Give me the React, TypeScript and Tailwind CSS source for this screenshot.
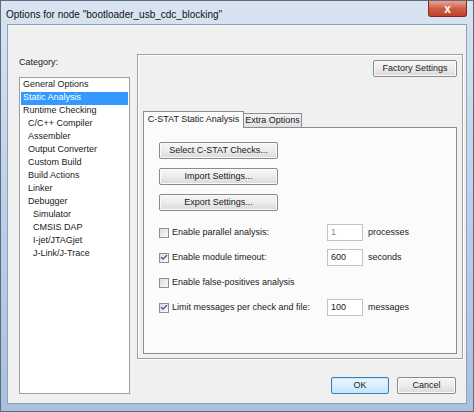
import { Check } from 'lucide-react'

const font = { fontFamily: '"Liberation Sans", Arial, sans-serif' }

function WinButton({ label, className = '' }: { label: string; className?: string }) {
  return (
    <div
      className={`flex h-[17px] items-center justify-center rounded-[2px] border border-[#8a8a8a] bg-gradient-to-b from-[#f6f6f6] via-[#ececec] to-[#d9d9d9] text-[9px] text-[#1a1a1a] shadow-[inset_0_0_0_1px_#fbfbfb] ${className}`}
    >
      {label}
    </div>
  )
}

function CheckBox({ checked }: { checked: boolean }) {
  return (
    <div className="flex h-[10px] w-[10px] items-center justify-center border border-[#8f8f8f] bg-gradient-to-br from-[#dcdcdc] to-[#fafafa]">
      {checked && <Check className="h-[9px] w-[9px] text-[#3b4f8a]" strokeWidth={3.5} />}
    </div>
  )
}

function OptionRow({
  checked,
  label,
  value,
  unit,
}: {
  checked: boolean
  label: string
  value?: string
  unit?: string
}) {
  return (
    <div className="flex h-[17px] items-center">
      <CheckBox checked={checked} />
      <span className="ml-[3px] w-[155px] text-[9px] text-[#1a1a1a]">{label}</span>
      {value !== undefined && (
        <>
          <div
            className={`flex h-[17px] w-[36px] items-center border border-[#c2c2c2] bg-white pl-[3px] text-[9px] ${
              checked ? 'text-[#1a1a1a]' : 'text-[#8a8a8a]'
            }`}
          >
            {value}
          </div>
          <span className="ml-[5px] text-[9px] text-[#1a1a1a]">{unit}</span>
        </>
      )}
    </div>
  )
}

const categories = [
  { name: 'General Options', level: 0 },
  { name: 'Static Analysis', level: 0, selected: true },
  { name: 'Runtime Checking', level: 0 },
  { name: 'C/C++ Compiler', level: 1 },
  { name: 'Assembler', level: 1 },
  { name: 'Output Converter', level: 1 },
  { name: 'Custom Build', level: 1 },
  { name: 'Build Actions', level: 1 },
  { name: 'Linker', level: 1 },
  { name: 'Debugger', level: 1 },
  { name: 'Simulator', level: 2 },
  { name: 'CMSIS DAP', level: 2 },
  { name: 'I-jet/JTAGjet', level: 2 },
  { name: 'J-Link/J-Trace', level: 2 },
]

const indent = ['pl-[2px]', 'pl-[7px]', 'pl-[12px]']

export default function App() {
  return (
    <div
      style={font}
      className="flex h-[412px] w-[474px] flex-col overflow-hidden border border-[#5d6b7d] bg-gradient-to-b from-[#d9e4f1] via-[#bcd0e8] to-[#a9c0de]"
    >
      {/* title bar */}
      <div className="flex h-[23px] shrink-0 items-start">
        <span className="mt-[6px] ml-[5px] text-[10px] text-[#111]">
          Options for node "bootloader_usb_cdc_blocking"
        </span>
        <div className="ml-auto mr-[6px] flex h-[16px] w-[39px] items-center justify-center rounded-b-[3px] border border-t-0 border-[#7a2a20] bg-gradient-to-b from-[#e8a493] via-[#cf5d45] to-[#c2412a]">
          <span className="text-[12px] font-bold leading-none text-white">x</span>
        </div>
      </div>

      {/* client area */}
      <div className="mx-[6px] mb-[7px] flex flex-1 border border-[#8ea2bd] bg-[#f0f0f0] pt-[29px] pl-[11px]">
        {/* left column */}
        <div className="flex w-[111px] shrink-0 flex-col">
          <span className="mt-[2px] text-[9px] text-[#1a1a1a]">Category:</span>
          <div className="mt-[7px] h-[317px] border border-[#9d9d9d] bg-white pt-[1px] pl-[1px] pr-[1px]">
            {categories.map((c) => (
              <div
                key={c.name}
                className={`flex h-[13px] items-center text-[9px] ${indent[c.level]} ${
                  c.selected ? 'bg-[#3399ff] text-white' : 'text-[#1a1a1a]'
                }`}
              >
                {c.name}
              </div>
            ))}
          </div>
        </div>

        {/* right column */}
        <div className="ml-[7px] flex w-[326px] flex-col">
          <div className="flex h-[305px] flex-col border border-[#a0a0a0] shadow-[1px_1px_0_#ffffff,inset_1px_1px_0_#ffffff] px-[5px] pt-[5px]">
            <div className="flex justify-end">
              <WinButton label="Factory Settings" className="w-[84px]" />
            </div>

            {/* tabs */}
            <div className="mt-[34px] flex h-[16px] items-end">
              <div className="relative z-10 -mb-px flex h-[17px] w-[101px] items-center justify-center border border-b-0 border-[#898c95] bg-[#fbfbfb] text-[9px] text-[#1a1a1a]">
                C-STAT Static Analysis
              </div>
              <div className="flex h-[14px] w-[58px] items-center justify-center border border-b-0 border-l-0 border-[#898c95] bg-gradient-to-b from-[#f2f2f2] to-[#e0e0e0] text-[9px] text-[#1a1a1a]">
                Extra Options
              </div>
            </div>
            <div className="h-[227px] border border-[#898c95] bg-[#fbfbfb] pl-[15px] pt-[14px]">
              <div className="flex flex-col gap-[9px]">
                <WinButton label="Select C-STAT Checks..." className="w-[119px]" />
                <WinButton label="Import Settings..." className="w-[119px]" />
                <WinButton label="Export Settings..." className="w-[119px]" />
              </div>
              <div className="mt-[13px] flex flex-col gap-[8px]">
                <OptionRow checked={false} label="Enable parallel analysis:" value="1" unit="processes" />
                <OptionRow checked={true} label="Enable module timeout:" value="600" unit="seconds" />
                <OptionRow checked={false} label="Enable false-positives analysis" />
                <OptionRow
                  checked={true}
                  label="Limit messages per check and file:"
                  value="100"
                  unit="messages"
                />
              </div>
            </div>
          </div>

          <div className="mt-[18px] mr-[7px] flex justify-end gap-[8px]">
            <div className="flex h-[17px] w-[58px] items-center justify-center rounded-[2px] border border-[#3c7fb1] bg-gradient-to-b from-[#eaf6fd] via-[#d9f0fc] to-[#bee6fd] text-[9px] text-[#1a1a1a] shadow-[inset_0_0_0_1px_#c5e9fb]">
              OK
            </div>
            <WinButton label="Cancel" className="w-[59px]" />
          </div>
        </div>
      </div>
    </div>
  )
}
